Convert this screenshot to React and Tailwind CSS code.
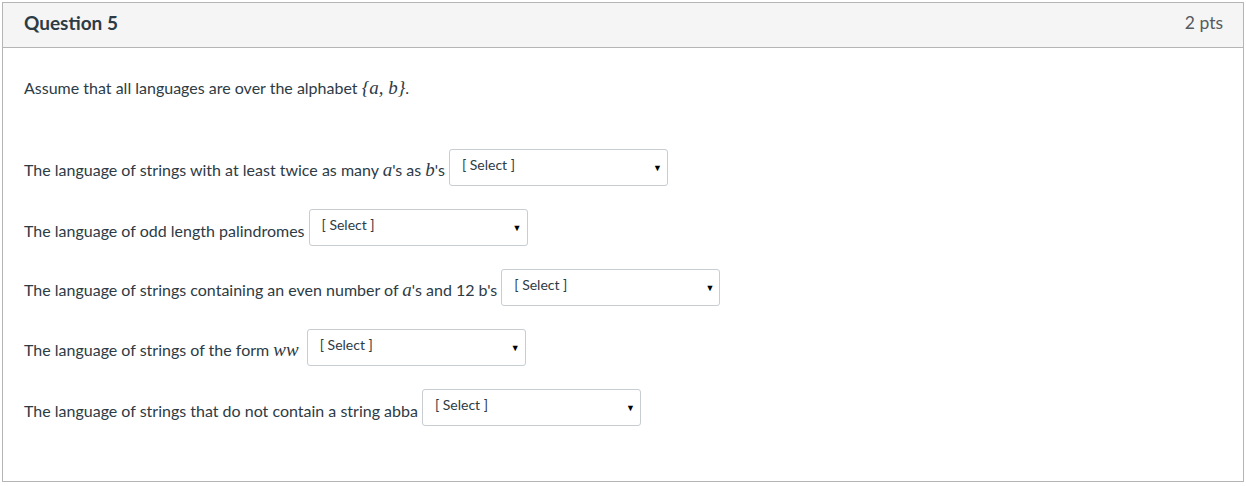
import React from "react";

const M = ({ children }) => (
  <span className="italic text-[19px]" style={{ fontFamily: '"Liberation Serif", "DejaVu Serif", serif' }}>
    {children}
  </span>
);

const Select = () => (
  <div className="ml-[4px] h-[37px] w-[219px] border border-[#c7cdd1] rounded-[3px] bg-white flex items-start justify-between pl-[12px] pr-[5px] pt-[6px] shrink-0">
    <span className="text-[14px] text-[#2d3b45] leading-[18px]">[ Select ]</span>
    <span className="text-[9px] text-black mt-[5px]">▼</span>
  </div>
);

export default function App() {
  return (
    <div className="pt-[2px] pl-[2px] bg-white w-[1246px] h-[486px]" style={{ fontFamily: 'Lato, "Open Sans", sans-serif' }}>
      <div className="w-[1242px] h-[480px] border border-[#b5b5b5] flex flex-col">
        <div className="h-[45px] bg-[#f5f5f5] border-b border-[#b5b5b5] flex items-center justify-between pl-[21px] pr-[20px] pb-[4px] shrink-0">
          <span className="text-[19px] font-bold text-[#2d3b45]">Question 5</span>
          <span className="text-[17.5px] text-[#555a5f]">2 pts</span>
        </div>
        <div className="pl-[21px] text-[16px] text-[#2d3b45]">
          <div className="mt-[30px] h-[20px] flex items-center">
            Assume that all languages are over the alphabet&nbsp;
            <M>{"{a, b}"}</M>.
          </div>
          <div className="mt-[51px] flex flex-col gap-[23px]">
            <div className="flex items-center">
              <span className="mt-[6px]">
                The language of strings with at least twice as many <M>a</M>'s as <M>b</M>'s
              </span>
              <Select />
            </div>
            <div className="flex items-center">
              <span className="mt-[6px]">The language of odd length palindromes</span>
              <Select />
            </div>
            <div className="flex items-center">
              <span className="mt-[6px]">
                The language of strings containing an even number of <M>a</M>'s and 12 b's
              </span>
              <Select />
            </div>
            <div className="flex items-center">
              <span className="mt-[6px]">
                The language of strings of the form <M>ww</M>&nbsp;
              </span>
              <Select />
            </div>
            <div className="flex items-center">
              <span className="mt-[6px]">The language of strings that do not contain a string abba</span>
              <Select />
            </div>
          </div>
        </div>
      </div>
    </div>
  );
}
